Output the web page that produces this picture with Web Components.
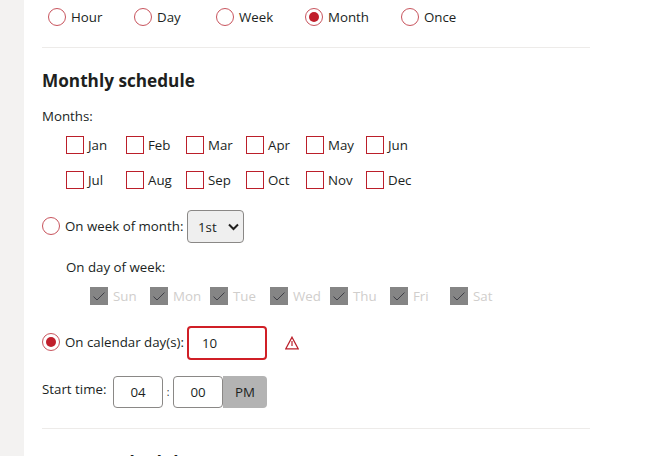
<!DOCTYPE html>
<html><head><meta charset="utf-8"><style>
html,body{margin:0;height:100%;overflow:hidden;background:#fff}
body{font:13.3px/18px "Open Sans","Noto Sans",sans-serif;color:#201f1e}
</style></head><body>
<sched-app></sched-app>
<script>
const el=(name,css,html)=>{class C extends HTMLElement{constructor(){super();this.attachShadow({mode:'open'}).innerHTML=`<style>${css}</style>`+(typeof html==='function'?html(this):html)}}
customElements.define(name,C)};
el('x-radio',`:host{display:inline-flex;align-items:center;gap:5px;height:18px}
i{box-sizing:border-box;width:18px;height:18px;border-radius:50%;border:1.5px solid #c8545d;display:flex;align-items:center;justify-content:center;flex:none}
b{width:10px;height:10px;border-radius:50%;background:#c01f2c}`,h=>`<i>${h.hasAttribute('on')?'<b></b>':''}</i><slot></slot>`);
el('x-check',`:host{display:inline-flex;align-items:center;gap:4px;height:18px}
i{box-sizing:border-box;width:18px;height:18px;border:1px solid #bb1f2a;flex:none;display:block}
:host([off]){color:#d0cecc;gap:5px}
:host([off]) i{border:0;background:#858585}
svg{display:block}`,h=>`<i>${h.hasAttribute('off')?'<svg width="18" height="18" viewBox="0 0 18 18"><path d="M3.5 9.6 7 13 14.5 5.5" fill="none" stroke="#3f3f46" stroke-width="1"/></svg>':''}</i><slot></slot>`);
el('x-select',`:host{display:inline-flex;box-sizing:border-box;width:57px;height:33px;border:1px solid #8a8886;border-radius:4px;background:#efefef;align-items:center;padding-left:10px;justify-content:space-between;padding-right:4px}
svg{display:block}`,`<slot></slot><svg width="11" height="8" viewBox="0 0 11 8"><path d="M1 1.5 5.5 6 10 1.5" fill="none" stroke="#201f1e" stroke-width="2"/></svg>`);
el('x-field',`:host{display:inline-flex;box-sizing:border-box;width:50px;height:32px;border:1px solid #8a8886;border-radius:4px;align-items:center;justify-content:center;background:#fff}
:host([error]){width:80px;height:34px;border:2px solid #d01f26;justify-content:flex-start;padding-left:13px}`,`<slot></slot>`);
el('sched-app',`:host{display:block;height:456px;overflow:hidden;background:#f3f2f1;padding-left:24px}
.main{background:#fff;height:456px;padding:8px 75px 0 18px;box-sizing:border-box;overflow:hidden}
.freq{display:grid;grid-template-columns:86px 82px 89px 96px auto;padding-left:6px;height:18px}
hr{border:0;border-top:1px solid #edebe9;margin:0}
h2{font:700 17.2px/24px "Open Sans","Noto Sans",sans-serif;margin:0;color:#201f1e}
.months{display:grid;grid-template-columns:repeat(6,60px);row-gap:17px;padding-left:24px;margin-top:11px}
.row{display:flex;align-items:center}
.row x-radio{align-self:flex-start;margin-top:7px;width:145px}
.days{display:grid;grid-template-columns:repeat(7,60px);padding-left:48px;margin-top:11px}
.err{margin-left:18px;display:block}
.colon{width:10px;text-align:center;font-size:10px}
.pm{box-sizing:border-box;width:44px;height:32px;background:#b3b3b3;border-radius:0 4px 4px 0;display:flex;align-items:center;justify-content:center}`,`<div class="main">
<div class="freq"><x-radio>Hour</x-radio><x-radio>Day</x-radio><x-radio>Week</x-radio><x-radio on>Month</x-radio><x-radio>Once</x-radio></div>
<hr style="margin-top:21px">
<h2 style="margin-top:21px">Monthly schedule</h2>
<div style="margin-top:14px">Months:</div>
<div class="months">${'Jan Feb Mar Apr May Jun Jul Aug Sep Oct Nov Dec'.split(' ').map(m=>`<x-check>${m}</x-check>`).join('')}</div>
<div class="row" style="margin-top:21px"><x-radio>On week of month:</x-radio><x-select>1st</x-select></div>
<div style="margin-top:15px;padding-left:24px">On day of week:</div>
<div class="days">${'Sun Mon Tue Wed Thu Fri Sat'.split(' ').map(m=>`<x-check off>${m}</x-check>`).join('')}</div>
<div class="row" style="margin-top:21px"><x-radio on>On calendar day(s):</x-radio><x-field error>10</x-field>
<svg class="err" width="14" height="14" viewBox="0 0 14 14"><path d="M7 1.2 13.2 12.8H.8Z" fill="none" stroke="#bb1f2a" stroke-width="1.3"/><path d="M7 5v5" stroke="#bb1f2a" stroke-width="1.2"/></svg></div>
<div class="row" style="margin-top:16px"><span style="width:71px;margin-top:-6px">Start time:</span><x-field>04</x-field><span class="colon">:</span><x-field>00</x-field><span class="pm">PM</span></div>
<hr style="margin-top:20px">
<h2 style="margin-top:22px">Custom schedule</h2>
</div>`);
</script></body></html>
